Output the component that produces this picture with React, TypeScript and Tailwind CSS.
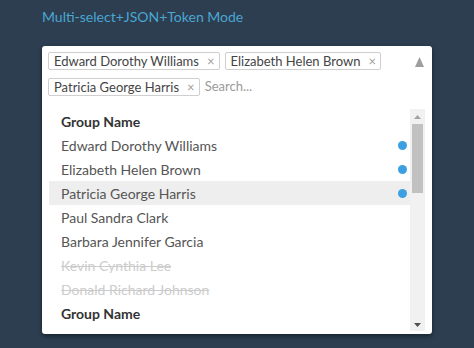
import React from "react";

type Row = { label: string; kind: "group" | "item" | "disabled"; selected?: boolean; active?: boolean };

const rows: Row[] = [
  { label: "Group Name", kind: "group" },
  { label: "Edward Dorothy Williams", kind: "item", selected: true },
  { label: "Elizabeth Helen Brown", kind: "item", selected: true },
  { label: "Patricia George Harris", kind: "item", selected: true, active: true },
  { label: "Paul Sandra Clark", kind: "item" },
  { label: "Barbara Jennifer Garcia", kind: "item" },
  { label: "Kevin Cynthia Lee", kind: "disabled" },
  { label: "Donald Richard Johnson", kind: "disabled" },
  { label: "Group Name", kind: "group" },
];

function Tag({ label }: { label: string }) {
  return (
    <div className="flex h-[18px] items-center rounded-[2px] border border-[#cfcfcf] bg-white pl-[5px] pr-[4px] text-[13px] leading-none text-[#444]">
      <span>{label}</span>
      <span className="ml-[8px] text-[13px] leading-none text-[#a0a0a0]">×</span>
    </div>
  );
}

export default function App() {
  return (
    <div
      className="h-[348px] w-[474px] overflow-hidden bg-[#2c3e50] px-[42px] pt-[7px]"
      style={{ fontFamily: "Lato, 'Open Sans', sans-serif" }}
    >
      <div className="h-[20px] text-[14px] leading-[20px] text-[#4ba6d3]">Multi-select+JSON+Token Mode</div>
      <div className="mt-[19px] flex h-[288px] w-[390px] flex-col rounded-[3px] bg-white shadow-[0_2px_4px_rgba(0,0,0,0.45)]">
        <div className="flex items-start pl-[6px] pr-[8px] pt-[6px]">
          <div className="flex flex-1 flex-wrap gap-x-[5px] gap-y-[8px]">
            <Tag label="Edward Dorothy Williams" />
            <Tag label="Elizabeth Helen Brown" />
            <Tag label="Patricia George Harris" />
            <div className="flex h-[18px] items-center text-[13px] text-[#9a9a9a]">Search...</div>
          </div>
          <div className="mt-[5px]">
            <svg width="9" height="10" viewBox="0 0 9 10"><path d="M0 10 L4.5 0 L9 10Z" fill="#9e9e9e" /></svg>
          </div>
        </div>
        <div className="mx-[7px] mt-[13px] flex h-[222px] overflow-hidden">
          <div className="flex-1 overflow-hidden">
            {rows.map((r, i) => (
              <div
                key={i}
                className={
                  "flex h-[24px] items-center justify-between pl-[12px] pr-[3px] text-[14px] " +
                  (r.active ? "bg-[#eeeeee] " : "") +
                  (r.kind === "group"
                    ? "font-bold text-[#333]"
                    : r.kind === "disabled"
                    ? "text-[#cccccc] line-through"
                    : "text-[#555]")
                }
              >
                <span>{r.label}</span>
                {r.selected && <span className="h-[9px] w-[9px] rounded-full bg-[#3d9fe0]" />}
              </div>
            ))}
          </div>
          <div className="flex w-[15px] flex-col items-center bg-[#f1f1f1]">
            <div className="flex h-[15px] items-center justify-center">
              <svg width="7" height="4" viewBox="0 0 7 4"><path d="M0 4 L3.5 0 L7 4Z" fill="#a3a3a3" /></svg>
            </div>
            <div className="h-[69px] w-[11px] bg-[#c1c1c1]" />
            <div className="flex-1" />
            <div className="flex h-[13px] items-center justify-center">
              <svg width="7" height="4" viewBox="0 0 7 4"><path d="M0 0 L3.5 4 L7 0Z" fill="#505050" /></svg>
            </div>
          </div>
        </div>
      </div>
    </div>
  );
}
